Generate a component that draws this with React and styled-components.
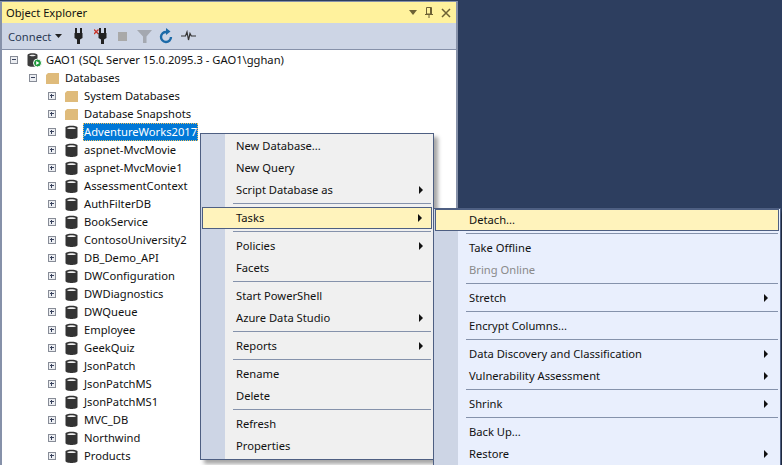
import React from "react";
import styled, { createGlobalStyle } from "styled-components";

const Global = createGlobalStyle`
  html, body { margin: 0; padding: 0; background: #2d3e5f; }
  body { font-family: "Noto Sans", "Open Sans", sans-serif; font-size: 11.2px; color: #111; }
`;

const Page = styled.div`
  position: relative;
  width: 782px;
  height: 465px;
  overflow: hidden;
  background: #2d3e5f;
`;

const Panel = styled.div`
  width: 458px;
  height: 464px;
  margin-top: 1px;
  display: flex;
  flex-direction: column;
  box-sizing: border-box;
  border-top: 1px solid #8691a9;
  border-left: 2px solid #8691a9;
  border-right: 2px solid #8691a9;
`;

const TitleBar = styled.div`
  height: 21px;
  flex: none;
  display: flex;
  align-items: center;
  justify-content: space-between;
  padding: 0 5px 0 4px;
  background: #fff29d;
`;

const TitleIcons = styled.div`
  display: flex;
  align-items: center;
  gap: 8px;
  color: #6d6134;
`;

const Toolbar = styled.div`
  height: 27px;
  flex: none;
  display: flex;
  align-items: center;
  padding-left: 6px;
  box-sizing: border-box;
  background: #cdd5e5;
  border-bottom: 1px solid #8691a9;
`;

const ConnectLabel = styled.span`
  width: 47px;
  color: #2b3a55;
`;

const Tool = styled.span`
  display: inline-flex;
  align-items: center;
  justify-content: center;
  width: ${(p) => p.$w || 22}px;
  height: 18px;
`;

const Tree = styled.div`
  flex: 1;
  background: #fff;
  padding-top: 1px;
  overflow: hidden;
`;

const Row = styled.div`
  display: flex;
  align-items: center;
  height: 18px;
  padding-left: ${(p) => 8 + p.$level * 19}px;
`;

const Expander = styled.span`
  position: relative;
  flex: none;
  box-sizing: border-box;
  width: 8px;
  height: 8px;
  margin-right: 8px;
  border: 1px solid #878c97;
  background: #eceef2;
  &::before {
    content: "";
    position: absolute;
    left: 1px;
    top: 2px;
    width: 4px;
    height: 1px;
    background: #37415c;
  }
  &::after {
    content: "";
    display: ${(p) => (p.$open ? "none" : "block")};
    position: absolute;
    left: 2px;
    top: 1px;
    width: 1px;
    height: 4px;
    background: #37415c;
  }
`;

const NodeIcon = styled.span`
  flex: none;
  display: inline-flex;
  width: 16px;
  height: 16px;
  margin-right: 3px;
`;

const Label = styled.span`
  height: 18px;
  line-height: 17px;
  padding: 0 1px;
  white-space: nowrap;
  box-sizing: border-box;
  ${(p) =>
    p.$selected &&
    `
    background: #0078d7;
    color: #fff;
    outline: 1px dotted #f0c060;
    outline-offset: -1px;
  `}
`;

const Menu = styled.div`
  position: absolute;
  left: ${(p) => p.$left}px;
  top: ${(p) => p.$top}px;
  width: ${(p) => p.$width}px;
  box-sizing: border-box;
  padding: ${(p) => p.$padTop}px 1px 2px;
  border: 1px solid #4e5f82;
  background: linear-gradient(
    to right,
    #cdd5e5 0,
    #cdd5e5 ${(p) => p.$gutter}px,
    ${(p) => p.$bg} ${(p) => p.$gutter}px
  );
  box-shadow: 4px 4px 4px rgba(0, 0, 0, 0.35);
`;

const MenuRow = styled.div`
  position: relative;
  display: flex;
  align-items: center;
  height: 22px;
  box-sizing: border-box;
  padding-bottom: 2px;
  padding-left: ${(p) => p.$indent}px;
  color: ${(p) => (p.$disabled ? "#8a8a8a" : "#111")};
  ${(p) => p.$active && `background: #fff3bc; border: 1px solid #4e5f82; padding-left: ${p.$indent - 1}px;`}
`;

const Arrow = styled.span`
  position: absolute;
  right: ${(p) => p.$right}px;
  top: 50%;
  margin-top: -4px;
  width: 0;
  height: 0;
  border-left: 4px solid #111;
  border-top: 4px solid transparent;
  border-bottom: 4px solid transparent;
`;

const Separator = styled.div`
  height: 1px;
  margin: 2px 1px 3px ${(p) => p.$indent - 3}px;
  background: #8592ab;
`;

const DbIcon = () => (
  <svg width="16" height="16" viewBox="0 0 16 16">
    <path d="M1.5 3.5C1.5 1 13.5 1 13.5 3.5V13C13.5 15.6 1.5 15.6 1.5 13Z" fill="#333" />
    <path d="M3 4.2C5 3 10 3 12 4.2C10 5.4 5 5.4 3 4.2Z" fill="#f2f2f2" />
  </svg>
);

const ServerIcon = () => (
  <svg width="16" height="16" viewBox="0 0 16 16">
    <path d="M1.5 3C1.5 0.6 11.5 0.6 11.5 3V13C11.5 15.4 1.5 15.4 1.5 13Z" fill="#3c3c3c" />
    <path d="M3 3.4C4.6 2.4 8.4 2.4 10 3.4C8.4 4.4 4.6 4.4 3 3.4Z" fill="#eee" />
    <circle cx="11.5" cy="11" r="4" fill="#1f9a3c" stroke="#fff" />
    <path d="M10.2 9L13.4 11L10.2 13Z" fill="#fff" />
  </svg>
);

const FolderIcon = () => (
  <svg width="16" height="16" viewBox="0 0 16 16">
    <path d="M1 5L3 3H14V14H1Z" fill="#dfbb7b" />
  </svg>
);

const Plug = ({ off }) => (
  <svg width="16" height="18" viewBox="0 0 16 18">
    {off && <path d="M0 2.5L4.5 7M4.5 2.5L0 7" stroke="#c8352b" strokeWidth="1.3" />}
    <path d="M6 1V6M11 1V6" stroke="#222" strokeWidth="2" />
    <path d="M4.5 6H12.5V11L10 12.5V17H7V12.5L4.5 11Z" fill="#222" />
  </svg>
);

const dbs = [
  "AdventureWorks2017", "aspnet-MvcMovie", "aspnet-MvcMovie1", "AssessmentContext",
  "AuthFilterDB", "BookService", "ContosoUniversity2", "DB_Demo_API", "DWConfiguration",
  "DWDiagnostics", "DWQueue", "Employee", "GeekQuiz", "JsonPatch", "JsonPatchMS",
  "JsonPatchMS1", "MVC_DB", "Northwind", "Products",
];

const mainMenu = [
  { t: "New Database..." }, { t: "New Query" }, { t: "Script Database as", sub: true }, "-",
  { t: "Tasks", sub: true, active: true }, "-",
  { t: "Policies", sub: true }, { t: "Facets" }, "-",
  { t: "Start PowerShell" }, { t: "Azure Data Studio", sub: true }, "-",
  { t: "Reports", sub: true }, "-",
  { t: "Rename" }, { t: "Delete" }, "-",
  { t: "Refresh" }, { t: "Properties" },
];

const taskMenu = [
  { t: "Detach...", active: true }, "-",
  { t: "Take Offline" }, { t: "Bring Online", disabled: true }, "-",
  { t: "Stretch", sub: true }, "-",
  { t: "Encrypt Columns..." }, "-",
  { t: "Data Discovery and Classification", sub: true },
  { t: "Vulnerability Assessment", sub: true }, "-",
  { t: "Shrink", sub: true }, "-",
  { t: "Back Up..." }, { t: "Restore", sub: true },
];

function MenuList({ items, indent, arrowRight }) {
  return items.map((it, i) =>
    it === "-" ? (
      <Separator key={i} $indent={indent} />
    ) : (
      <MenuRow key={i} $indent={indent} $active={it.active} $disabled={it.disabled}>
        {it.t}
        {it.sub && <Arrow $right={arrowRight} />}
      </MenuRow>
    )
  );
}

export default function App() {
  return (
    <Page>
      <Global />
      <Panel>
        <TitleBar>
          <span>Object Explorer</span>
          <TitleIcons>
            <svg width="8" height="5" viewBox="0 0 8 5"><path d="M0 0H8L4 5Z" fill="currentColor" /></svg>
            <svg width="8" height="11" viewBox="0 0 8 11" fill="none" stroke="currentColor">
              <path d="M1.5 .5H6.5V7H1.5ZM0 7.5H8M4 8V11M5.5 1V7" />
            </svg>
            <svg width="10" height="10" viewBox="0 0 10 10" stroke="currentColor" strokeWidth="1.5">
              <path d="M1 1L9 9M9 1L1 9" />
            </svg>
          </TitleIcons>
        </TitleBar>
        <Toolbar>
          <ConnectLabel>Connect</ConnectLabel>
          <svg width="7" height="4" viewBox="0 0 7 4"><path d="M0 0H7L3.5 4Z" fill="#222" /></svg>
          <Tool $w={32}><Plug /></Tool>
          <Tool $w={16}><Plug off /></Tool>
          <Tool $w={24}>
            <svg width="9" height="9"><rect width="9" height="9" fill="#a9a9a9" /></svg>
          </Tool>
          <Tool $w={20}>
            <svg width="15" height="15" viewBox="0 0 15 15"><path d="M0 1H15L9.5 7.5V14H6V7.5Z" fill="#a4a8b0" /></svg>
          </Tool>
          <Tool $w={24}>
            <svg width="14" height="16" viewBox="0 0 14 16" fill="none">
              <path d="M7.5 4A5 5 0 1 0 12 9" stroke="#1c6aa8" strokeWidth="2.4" />
              <path d="M7 0V7L11.5 3.5Z" fill="#1c6aa8" />
            </svg>
          </Tool>
          <Tool $w={20}>
            <svg width="15" height="12" viewBox="0 0 15 12" fill="none" stroke="#333" strokeWidth="1.2">
              <path d="M0 6H4.5L6 2L7.5 10L9 3.5L10.3 6H15" />
            </svg>
          </Tool>
        </Toolbar>
        <Tree>
          <Row $level={0}>
            <Expander $open />
            <NodeIcon><ServerIcon /></NodeIcon>
            <Label>GAO1 (SQL Server 15.0.2095.3 - GAO1\gghan)</Label>
          </Row>
          <Row $level={1}>
            <Expander $open />
            <NodeIcon><FolderIcon /></NodeIcon>
            <Label>Databases</Label>
          </Row>
          {["System Databases", "Database Snapshots"].map((n) => (
            <Row $level={2} key={n}>
              <Expander />
              <NodeIcon><FolderIcon /></NodeIcon>
              <Label>{n}</Label>
            </Row>
          ))}
          {dbs.map((n, i) => (
            <Row $level={2} key={n}>
              <Expander />
              <NodeIcon><DbIcon /></NodeIcon>
              <Label $selected={i === 0}>{n}</Label>
            </Row>
          ))}
        </Tree>
      </Panel>
      <Menu $left={200} $top={133} $width={234} $gutter={24} $bg="#f0f0f0" $padTop={1}>
        <MenuList items={mainMenu} indent={34} arrowRight={9} />
      </Menu>
      <Menu $left={433} $top={208} $width={348} $gutter={24} $bg="#e9effd" $padTop={0}>
        <MenuList items={taskMenu} indent={34} arrowRight={11} />
      </Menu>
    </Page>
  );
}
